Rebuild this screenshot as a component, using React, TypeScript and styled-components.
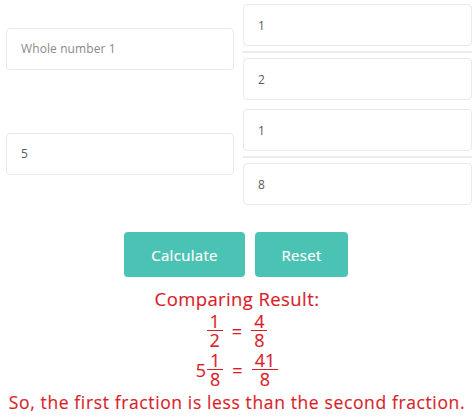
import styled, { createGlobalStyle } from "styled-components";

const GlobalStyle = createGlobalStyle`
  html, body {
    margin: 0;
    padding: 0;
    background: #ffffff;
  }
  body {
    font-family: "Open Sans", "Liberation Sans", sans-serif;
  }
  * {
    box-sizing: border-box;
  }
`;

const Page = {
  Main: styled.div`
    width: 474px;
    padding: 4px 2px 0 6px;
    display: flex;
    flex-direction: column;
  `,
  Grid: styled.div`
    display: grid;
    grid-template-columns: 228px 229px;
    column-gap: 9px;
    row-gap: 9px;
    align-items: center;
  `,
  Whole: styled.div`
    padding-bottom: 7px;
  `,
  Fraction: styled.div`
    display: flex;
    flex-direction: column;
    gap: 5px;
  `,
  Bar: styled.hr`
    margin: 0;
    border: none;
    border-top: 2px solid #ebebeb;
  `,
};

const Field = styled.input`
  width: 100%;
  height: 42px;
  padding: 0 14px;
  border: 1px solid #e9e9e9;
  border-radius: 4px;
  background: #fff;
  font-family: inherit;
  font-size: 12px;
  letter-spacing: 0.1px;
  color: #5a5a5a;
  outline: none;

  &::placeholder {
    color: #8a8a8a;
  }
`;

const Actions = styled.div`
  margin-top: 27px;
  display: flex;
  justify-content: center;
  gap: 10px;
  padding-right: 6px;
`;

const Button = styled.button<{ $width: number }>`
  width: ${(p) => p.$width}px;
  height: 45px;
  border: none;
  border-radius: 4px;
  background: #4bc3b4;
  color: #fff;
  font-family: inherit;
  font-size: 15px;
  letter-spacing: 0.3px;
  -webkit-text-stroke: 0.2px #fff;
  cursor: pointer;
`;

const Result = {
  Box: styled.div`
    margin-top: 11px;
    display: flex;
    flex-direction: column;
    align-items: center;
    color: #d81e2a;
    -webkit-text-stroke: 0.15px #d81e2a;
    padding-right: 4px;
  `,
  Title: styled.div`
    font-size: 18.5px;
    letter-spacing: 0.4px;
    line-height: 22px;
  `,
  Row: styled.div`
    display: flex;
    align-items: center;
    gap: 9px;
    font-size: 18px;
    margin-top: 2px;
  `,
  Frac: styled.span`
    display: inline-flex;
    flex-direction: column;
    align-items: center;
    line-height: 18px;

    > span:first-child {
      border-bottom: 1.5px solid #d81e2a;
      padding: 0 3px;
      align-self: stretch;
      text-align: center;
    }
  `,
  Mixed: styled.span`
    display: inline-flex;
    align-items: center;
    gap: 1px;
  `,
  Summary: styled.div`
    margin-top: 2px;
    font-size: 17.5px;
    letter-spacing: 0.62px;
    line-height: 24px;
    white-space: nowrap;
  `,
};

const Frac = ({ n, d }: { n: string; d: string }) => (
  <Result.Frac>
    <span>{n}</span>
    <span>{d}</span>
  </Result.Frac>
);

const App = () => {
  return (
    <>
      <GlobalStyle />
      <Page.Main>
        <Page.Grid>
          <Page.Whole>
            <Field placeholder="Whole number 1" />
          </Page.Whole>
          <Page.Fraction>
            <Field defaultValue="1" />
            <Page.Bar />
            <Field defaultValue="2" />
          </Page.Fraction>
          <Page.Whole>
            <Field defaultValue="5" />
          </Page.Whole>
          <Page.Fraction>
            <Field defaultValue="1" />
            <Page.Bar />
            <Field defaultValue="8" />
          </Page.Fraction>
        </Page.Grid>
        <Actions>
          <Button $width={121}>Calculate</Button>
          <Button $width={93}>Reset</Button>
        </Actions>
        <Result.Box>
          <Result.Title>Comparing Result:</Result.Title>
          <Result.Row>
            <Frac n="1" d="2" />
            <span>=</span>
            <Frac n="4" d="8" />
          </Result.Row>
          <Result.Row>
            <Result.Mixed>
              <span>5</span>
              <Frac n="1" d="8" />
            </Result.Mixed>
            <span>=</span>
            <Frac n="41" d="8" />
          </Result.Row>
          <Result.Summary>
            So, the first fraction is less than the second fraction.
          </Result.Summary>
        </Result.Box>
      </Page.Main>
    </>
  );
};

export default App;
